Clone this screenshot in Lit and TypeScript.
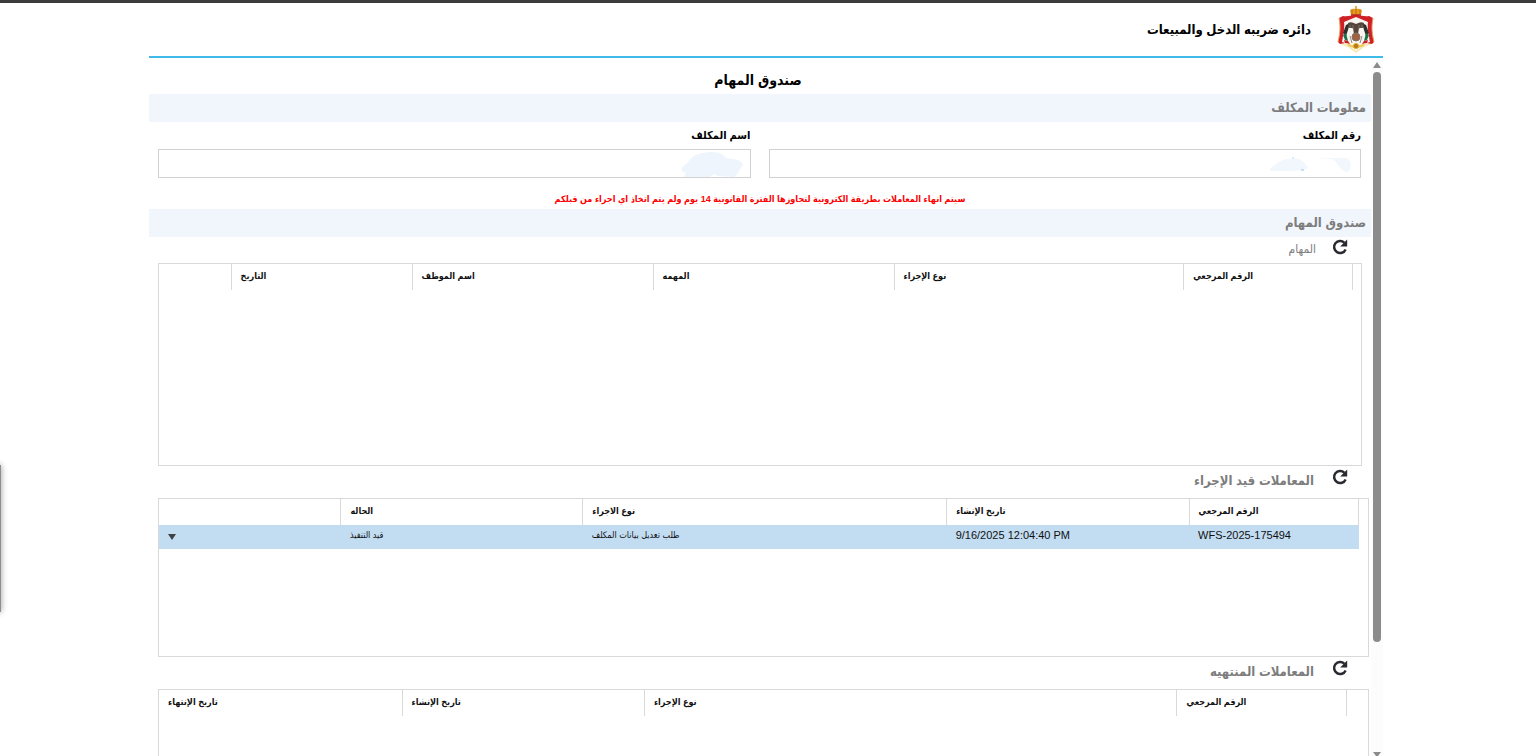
import { LitElement, html, css, svg } from "lit";
import { customElement, property } from "lit/decorators.js";

interface Column {
  label: string;
  width: string;
}

interface Cell {
  text: string;
  latin?: boolean;
}

@customElement("state-emblem")
class StateEmblem extends LitElement {
  static styles = css`
    :host { display: block; }
    svg { display: block; width: 38px; height: 48px; }
  `;

  render() {
    return html`<svg viewBox="0 0 38 48" role="img" aria-label="شعار المملكة">
      <path d="M3 37 L11 40 L19 46 L27 40 L35 37" fill="#fffbe9" stroke="#f5e6b0" stroke-width="1.5"/>
      <path d="M19 9 C13 9 11 11 6 10 L2 12 C3 18 4 24 1 36 L3 38 L8 37 L9 17 L19 12 L29 17 L30 37 L35 38 L37 36 C34 24 35 18 36 12 L32 10 C27 11 25 9 19 9Z" fill="#cf2026"/>
      <path d="M7 16 C8 22 6 30 5 36 L12 38 L26 38 L33 36 C32 30 30 22 31 16 L19 11Z" fill="#f8f4ef"/>
      <path d="M2 12 C3 19 4 23 1 36 M36 12 C35 19 34 23 37 36" fill="none" stroke="#e8a35a" stroke-width="1"/>
      <path d="M9 19 L13 17 L11 24 L9 30 L6 27Z M29 19 L25 17 L27 24 L29 30 L32 27Z" fill="#2e302c"/>
      <path d="M6 29 L9 27 L11 35 L8 34Z M32 29 L29 27 L27 35 L30 34Z" fill="#187449"/>
      <path d="M7 34 L11 35 L13 38 L8 37Z M31 34 L27 35 L25 38 L30 37Z" fill="#c91c22"/>
      <path d="M11 17 C14 15 17 17 19 18 C21 17 24 15 27 17 L26 22 L22 22 L21 28 L17 28 L16 22 L12 22Z" fill="#54463d"/>
      <path d="M13 19 V22 M16 19 V23 M22 19 V23 M25 19 V22" stroke="#8c7a6d" stroke-width="0.8"/>
      <circle cx="19" cy="31" r="4" fill="#a4603d" stroke="#7f7469" stroke-width="1"/>
      <path d="M13 30 L15 37 M25 30 L23 37" stroke="#8d8b82" stroke-width="1"/>
      <path d="M10 37 Q19 42 28 37 L27 40 Q19 44 11 40Z" fill="#ecca5c"/>
      <circle cx="19" cy="40" r="2.6" fill="#b97819" stroke="#e8a92d" stroke-width="1"/>
      <path d="M14 9 L13 4 Q16 2 19 3 Q22 2 25 4 L24 9Z" fill="#e39b1c"/>
      <path d="M15 4 V8 M19 3 V8 M23 4 V8" stroke="#c4641e" stroke-width="1"/>
      <path d="M19 0 V3" stroke="#dd9a1e" stroke-width="1.6"/>
      <path d="M14 9 H24" stroke="#b31b1e" stroke-width="1.4"/>
    </svg>`;
  }
}

@customElement("refresh-button")
class RefreshButton extends LitElement {
  @property() label = "";

  static styles = css`
    :host { display: block; }
    button {
      display: block;
      padding: 0;
      border: 0;
      background: none;
      cursor: pointer;
    }
    svg { display: block; width: 16px; height: 16px; }
  `;

  render() {
    return html`<button type="button" aria-label=${this.label}>
      <svg viewBox="0 0 16 16" aria-hidden="true">
        <path d="M12.4 3.8 A6 6 0 1 0 13.6 10.4" fill="none" stroke="#2b2a30" stroke-width="2.5"/>
        <path d="M15.2 0.6 V7.4 H8.2Z" fill="#2b2a30"/>
      </svg>
    </button>`;
  }
}

@customElement("data-grid")
class DataGrid extends LitElement {
  @property({ attribute: false }) columns: Column[] = [];
  @property({ attribute: false }) rows: Cell[][] = [];
  @property() label = "";

  static styles = css`
    :host {
      display: block;
      box-sizing: border-box;
      border: 1px solid #d9d9d9;
      background: #fff;
    }
    table {
      width: 100%;
      table-layout: fixed;
      border-collapse: collapse;
    }
    th, td {
      box-sizing: border-box;
      padding: 0 9px;
      text-align: left;
      white-space: nowrap;
      line-height: 20px;
      color: #111;
    }
    th {
      height: 26px;
      padding-bottom: 2px;
      font-size: 9px;
      font-weight: bold;
      border-left: 1px solid #d9d9d9;
    }
    th:last-child { border-left: 0; }
    td {
      height: 24px;
      padding-bottom: 4px;
      font-size: 9px;
      background: #c2dcf1;
    }
    .edge { padding: 0; }
    td.edge:first-child { background: #fff; }
    .latin { font-size: 11px; }
    .menu {
      display: block;
      padding: 0;
      border: 0;
      background: none;
      margin-top: 4px;
    }
    .menu svg { display: block; width: 8px; height: 6px; }
  `;

  render() {
    return html`<table aria-label=${this.label}>
      <colgroup>
        <col>
        ${this.columns.map((c) => html`<col style="width:${c.width}">`)}
      </colgroup>
      <thead>
        <tr>
          <th class="edge"></th>
          ${this.columns.map((c) => html`<th scope="col">${c.label}</th>`)}
        </tr>
      </thead>
      <tbody>
        ${this.rows.map(
          (row) => html`<tr>
            <td class="edge"></td>
            ${row.map((cell) => html`<td class=${cell.latin ? "latin" : ""}><bdi>${cell.text}</bdi></td>`)}
            <td dir="ltr">
              <button class="menu" type="button" aria-label="خيارات">
                <svg viewBox="0 0 8 6" aria-hidden="true"><path d="M0 0 H8 L4 6Z" fill="#3f4143"/></svg>
              </button>
            </td>
          </tr>`
        )}
      </tbody>
    </table>`;
  }
}

const taskColumns: Column[] = [
  { label: "الرقم المرجعي", width: "14.05%" },
  { label: "نوع الإجراء", width: "24.1%" },
  { label: "المهمه", width: "20.05%" },
  { label: "اسم الموظف", width: "20.05%" },
  { label: "التاريخ", width: "15.05%" },
  { label: "", width: "6%" },
];

const pendingColumns: Column[] = [
  { label: "الرقم المرجعي", width: "14.05%" },
  { label: "تاريخ الإنشاء", width: "20.05%" },
  { label: "نوع الاجراء", width: "30.1%" },
  { label: "الحاله", width: "20%" },
  { label: "", width: "15.05%" },
];

const pendingRows: Cell[][] = [
  [
    { text: "WFS-2025-175494", latin: true },
    { text: "9/16/2025 12:04:40 PM", latin: true },
    { text: "طلب تعديل بيانات المكلف" },
    { text: "قيد التنفيذ" },
  ],
];

const finishedColumns: Column[] = [
  { label: "الرقم المرجعي", width: "14.05%" },
  { label: "نوع الإجراء", width: "44.05%" },
  { label: "تاريخ الإنشاء", width: "20.05%" },
  { label: "تاريخ الإنتهاء", width: "20.1%" },
];

const numberSmudge = svg`
  <path d="M4 15 C8 12 16 3 26 5 C34 3 38 8 42 14 C36 18 14 17 4 17Z" fill="#f1f7fd"/>
  <path d="M46 4 H80 C86 6 86 14 82 18 C74 18 72 8 66 5Z" fill="#f1f7fd"/>
  <path d="M35 16 h3" stroke="#9dbfe0" stroke-width="1"/>
  <path d="M26 4 h2" stroke="#c4dbf2" stroke-width="1"/>`;

const nameSmudge = svg`
  <path d="M4 16 C10 12 10 4 24 3 C36 0 44 4 46 8 C54 9 62 10 63 15 C60 18 58 26 54 27 L38 26 L34 24 L30 27 L4 27 L6 23 C1 22 0 18 4 16Z" fill="#eff5fc"/>`;

@customElement("app-root")
class AppRoot extends LitElement {
  static styles = css`
    :host {
      display: block;
      height: 100vh;
      overflow: hidden;
      position: relative;
      box-sizing: border-box;
      border-top: 3px solid #3c3c3c;
      background: #fff;
      color: #000;
      font-family: "Liberation Sans", "DejaVu Sans Condensed", "DejaVu Sans", sans-serif;
    }
    .frame {
      display: flex;
      flex-direction: column;
      height: 100%;
      margin: 0 153px 0 149px;
      direction: rtl;
    }
    header {
      display: flex;
      align-items: center;
      gap: 26px;
      box-sizing: border-box;
      height: 55px;
      flex: none;
      padding: 0 8px 0 0;
      border-bottom: 2px solid #3fbbe9;
    }
    .brand {
      font-size: 13px;
      font-weight: bold;
    }
    .body {
      display: flex;
      flex: 1;
      min-height: 0;
    }
    .scroll {
      flex: none;
      display: flex;
      flex-direction: column;
      align-items: center;
      width: 12px;
      padding-top: 4px;
      background: #fcfcfc;
    }
    .scroll svg { flex: none; display: block; width: 8px; height: 6px; }
    .track { flex: 1; width: 8px; padding-top: 4px; }
    .thumb {
      height: 84%;
      border-radius: 4px;
      background: #8b8b8b;
    }
    main {
      flex: 1;
      min-width: 0;
      overflow: hidden;
    }
    h1 {
      margin: 0;
      padding: 10px 4px 2px 0;
      text-align: center;
      font-size: 14px;
      line-height: 24px;
    }
    h2 {
      margin: 0;
      padding: 0 5px;
      height: 28px;
      line-height: 28px;
      font-size: 13px;
      color: #7d7d7d;
      background: #f1f6fd;
    }
    h3 {
      margin: 0;
      font-size: 13px;
      line-height: 24px;
      font-weight: bold;
      color: #7d7d7d;
    }
    .light {
      font-size: 12px;
      line-height: 20px;
      font-weight: normal;
    }
    .fields {
      display: grid;
      grid-template-columns: 1fr 1fr;
      gap: 18px;
      padding: 3px 10px 0 9px;
    }
    .field { position: relative; }
    label {
      display: block;
      font-size: 11px;
      line-height: 20px;
      font-weight: bold;
      padding-bottom: 4px;
    }
    input {
      display: block;
      box-sizing: border-box;
      width: 100%;
      height: 29px;
      border: 1px solid #d2d2d2;
      background: #fff;
    }
    .smudge {
      position: absolute;
      right: 5px;
      bottom: 1px;
      width: 90px;
      height: 27px;
    }
    .notice {
      margin: 0;
      padding: 11px 0 0;
      text-align: center;
      color: #f00;
      font-size: 9px;
      line-height: 20px;
      font-weight: bold;
    }
    .caption {
      display: flex;
      align-items: flex-start;
      gap: 18px;
      height: 32px;
      padding: 3px 23px 0 0;
      box-sizing: border-box;
    }
    .tasks-caption {
      gap: 16px;
      height: 26px;
      padding-top: 2px;
    }
    .tasks { height: 203px; margin: 0 9px; }
    .pending { height: 159px; margin: 0 2px 0 9px; }
    .finished { height: 203px; margin: 0 2px 0 9px; }
    .handle {
      position: absolute;
      left: -6px;
      top: 462px;
      width: 7px;
      height: 147px;
      background: #8f8f8f;
      box-shadow: 0 0 6px #999;
    }
  `;

  render() {
    return html`
      <div class="frame">
        <header>
          <state-emblem></state-emblem>
          <div class="brand">دائره ضريبه الدخل والمبيعات</div>
        </header>
        <div class="body">
          <div class="scroll" aria-hidden="true">
            <svg viewBox="0 0 8 6"><path d="M4 0 L8 6 H0Z" fill="#8b8b8b"/></svg>
            <div class="track"><div class="thumb"></div></div>
            <svg viewBox="0 0 8 6"><path d="M0 2 H8 L5 6 H3Z" fill="#8b8b8b"/></svg>
          </div>
          <main>
            <h1>صندوق المهام</h1>
            <h2>معلومات المكلف</h2>
            <div class="fields">
              <div class="field">
                <label for="payer-number">رقم المكلف</label>
                <input id="payer-number" type="text" readonly>
                <svg class="smudge" viewBox="0 0 90 27" aria-hidden="true"><g transform="translate(0 4)">${numberSmudge}</g></svg>
              </div>
              <div class="field">
                <label for="payer-name">اسم المكلف</label>
                <input id="payer-name" type="text" readonly>
                <svg class="smudge" viewBox="0 0 90 27" aria-hidden="true"><g transform="translate(24 0)">${nameSmudge}</g></svg>
              </div>
            </div>
            <p class="notice">سيتم انهاء المعاملات بطريقة الكترونية لتجاوزها الفترة القانونية 14 يوم ولم يتم اتخاذ اي اجراء من قبلكم</p>
            <h2>صندوق المهام</h2>
            <div class="caption tasks-caption">
              <refresh-button label="تحديث المهام"></refresh-button>
              <h3 class="light">المهام</h3>
            </div>
            <data-grid class="tasks" label="المهام" .columns=${taskColumns}></data-grid>
            <div class="caption">
              <refresh-button label="تحديث المعاملات قيد الإجراء"></refresh-button>
              <h3>المعاملات قيد الإجراء</h3>
            </div>
            <data-grid class="pending" label="المعاملات قيد الإجراء" .columns=${pendingColumns} .rows=${pendingRows}></data-grid>
            <div class="caption">
              <refresh-button label="تحديث المعاملات المنتهيه"></refresh-button>
              <h3>المعاملات المنتهيه</h3>
            </div>
            <data-grid class="finished" label="المعاملات المنتهيه" .columns=${finishedColumns}></data-grid>
          </main>
        </div>
      </div>
      <div class="handle" aria-hidden="true"></div>
    `;
  }
}
